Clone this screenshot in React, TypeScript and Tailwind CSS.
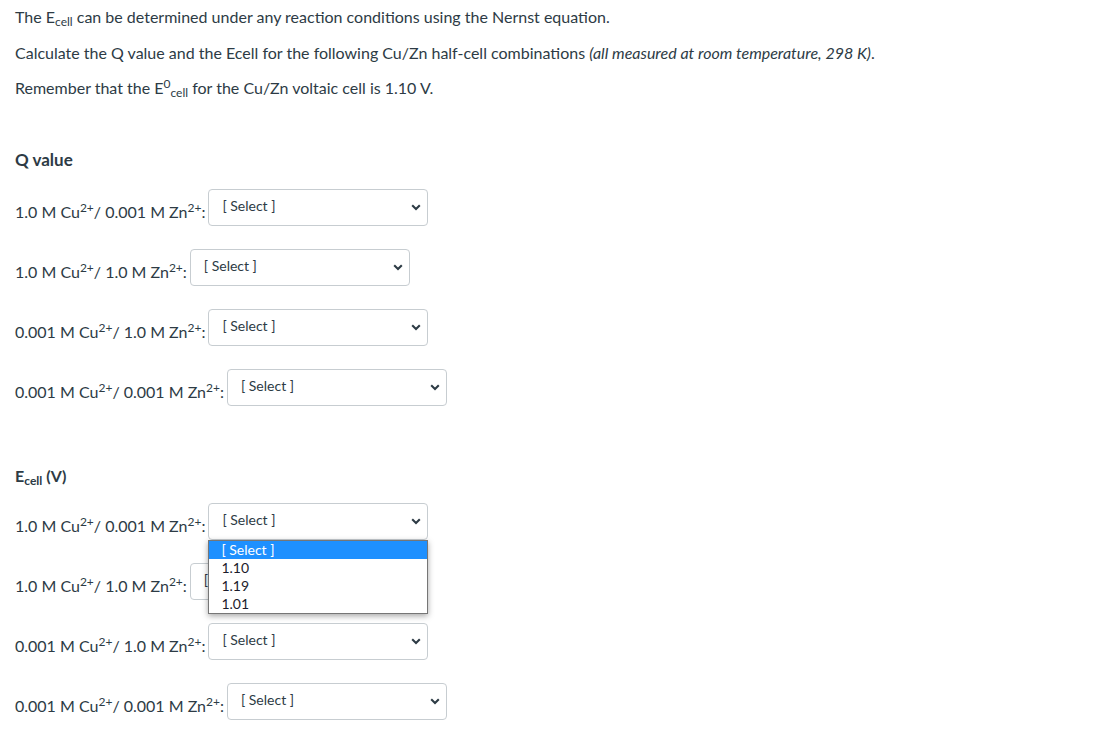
const FONT = { fontFamily: "Lato, 'Noto Sans', sans-serif" };

function Ion({ m, ion }: { m: string; ion: string }) {
  return (
    <>
      {m} M {ion}
      <sup className="text-[12px] -top-[0.45em]">2+</sup>
    </>
  );
}

function Chevron() {
  return (
    <svg width="10" height="7" viewBox="0 0 10 7" className="shrink-0">
      <path d="M1.2 1.3 L5 5 L8.8 1.3" fill="none" stroke="#2d3b45" strokeWidth="2.1" />
    </svg>
  );
}

function FakeSelect({ open = false }: { open?: boolean }) {
  return (
    <div className="relative">
      <div className="flex h-[37px] w-[220px] items-center justify-between rounded-[4px] border border-[#c7cdd1] bg-white pl-[13px] pr-[6px] text-[14px] text-[#2d3b45]">
        <span className="-mt-[3px]">[ Select ]</span>
        <Chevron />
      </div>
      {open && (
        <div className="absolute left-0 top-[37px] z-10 w-[220px] border border-[#767676] bg-white py-0 text-[14px] leading-[18px] text-[#1b1b2b] shadow-[0_2px_6px_rgba(0,0,0,0.35)]">
          <div className="bg-[#1e90ff] pl-[12px] text-white">[ Select ]</div>
          <div className="pl-[12px]">1.10</div>
          <div className="pl-[12px]">1.19</div>
          <div className="pl-[12px]">1.01</div>
        </div>
      )}
    </div>
  );
}

function Row({ cu, zn, open }: { cu: string; zn: string; open?: boolean }) {
  return (
    <div className="flex items-center gap-[3px]">
      <span className="mt-2 whitespace-nowrap">
        <Ion m={cu} ion="Cu" />/ <Ion m={zn} ion="Zn" />:
      </span>
      <FakeSelect open={open} />
    </div>
  );
}

const combos: [string, string][] = [
  ["1.0", "0.001"],
  ["1.0", "1.0"],
  ["0.001", "1.0"],
  ["0.001", "0.001"],
];

export default function App() {
  return (
    <div className="min-h-[744px] bg-white px-[15px] pt-[5px] text-[16px] leading-6 text-[#2d3b45]" style={FONT}>
      <p className="h-6">
        The E<sub className="text-[12px]">cell</sub> can be determined under any reaction conditions using the Nernst
        equation.
      </p>
      <p className="mt-3 h-6">
        Calculate the Q value and the Ecell for the following Cu/Zn half-cell combinations{" "}
        <em>(all measured at room temperature, 298 K)</em>.
      </p>
      <p className="mt-[11px] h-6">
        Remember that the E<sup className="text-[12px]">0</sup>
        <sub className="text-[12px]">cell</sub> for the Cu/Zn voltaic cell is 1.10 V.
      </p>

      <h3 className="mt-[48px] h-6 text-[17px] font-bold leading-6">Q value</h3>
      <div className="mt-[17px] flex flex-col gap-[23px]">
        {combos.map(([cu, zn], i) => (
          <Row key={i} cu={cu} zn={zn} />
        ))}
      </div>

      <h3 className="mt-[58px] h-6 text-[16px] font-bold leading-6">
        E<sub className="text-[12px]">cell</sub> (V)
      </h3>
      <div className="mt-[15px] flex flex-col gap-[23px]">
        {combos.map(([cu, zn], i) => (
          <Row key={i} cu={cu} zn={zn} open={i === 0} />
        ))}
      </div>
    </div>
  );
}
